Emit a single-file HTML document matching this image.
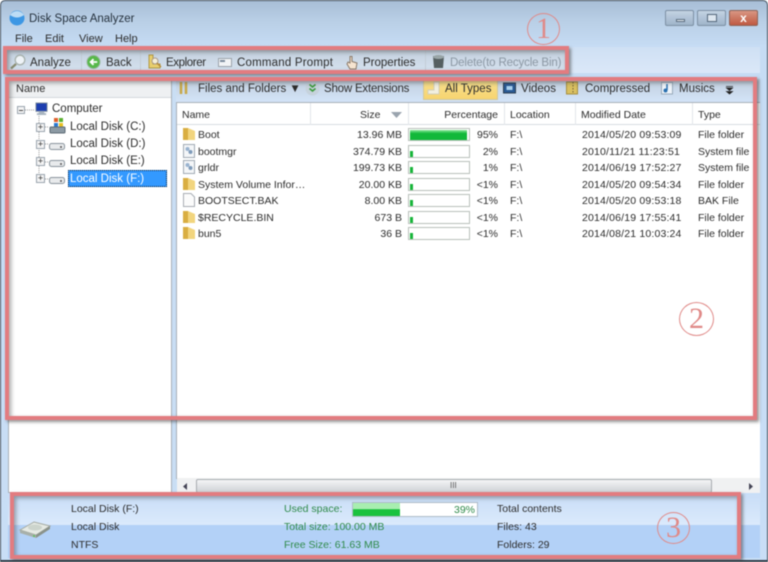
<!DOCTYPE html>
<html><head><meta charset="utf-8"><style>
html,body{margin:0;padding:0;width:768px;height:562px;overflow:hidden;background:#fff}
*{box-sizing:border-box}
body{font-family:"Liberation Sans",sans-serif;font-size:11px;color:#2c2c2c;position:relative;filter:blur(.4px)}
.a,.t{position:absolute}
.t{white-space:nowrap;line-height:14px;height:14px;margin-top:1px}
.r{text-align:right}
.s{font-size:10.5px}
.m{font-size:11.5px}
.d{letter-spacing:.17px}
.box{position:absolute;border:4px solid #e27c80;box-shadow:2px 2px 3px rgba(60,60,60,.55), inset 2px 2px 4px rgba(60,60,60,.45)}
.sep{position:absolute;width:1px;background:#c2ccd6}
.hs{position:absolute;width:1px;background:#e2e6ea;top:103px;height:22px}
.bar{position:absolute;left:408px;width:62px;height:13px;border:1px solid #b8c0ba;background:#fff}
.bar i{position:absolute;left:1px;top:5px;width:3px;height:6px;background:#18b53a;display:block}
.pm{position:absolute;left:36px;width:9px;height:9px;border:1px solid #9aa4ae;background:#f4f4f4;font:9px/7px "Liberation Sans",sans-serif;text-align:center}
.num{position:absolute;border:1.5px solid #e08a88;border-radius:50%;text-align:center;font-family:"Liberation Serif",serif;color:#e08a88}
svg{position:absolute;overflow:visible}
</style></head><body>
<div class="a" style="left:0;top:0;width:768px;height:562px;background:linear-gradient(#a8bed6 0,#b9cfe6 20px,#c6dcf4 45px,#c9def6 100%);border:1px solid #3c4a58;border-bottom:2px solid #2d3a46;border-radius:5px 5px 0 0"></div>

<!-- title -->
<svg style="left:9px;top:10px" width="16" height="16" viewBox="0 0 16 16"><circle cx="8" cy="8" r="7.5" fill="#3d97e4"/><path d="M1 5Q8 10 15 5Q12 1 8 1Q4 1 1 5Z" fill="#bcdcf5"/></svg>
<div class="t" style="left:29px;top:11px;font-size:11.5px;color:#26323e">Disk Space Analyzer</div>
<div class="t" style="left:15px;top:31px">File</div>
<div class="t" style="left:45px;top:31px">Edit</div>
<div class="t" style="left:79px;top:31px">View</div>
<div class="t" style="left:115px;top:31px">Help</div>

<!-- window buttons -->
<div class="a" style="left:665px;top:10px;width:29px;height:16px;border:1px solid #7d90a4;border-radius:2px;background:linear-gradient(#c4d3e3,#9fb4ca)"></div>
<div class="a" style="left:676px;top:19px;width:9px;height:3px;background:#eef3f8;border:1px solid #5a6c7e"></div>
<div class="a" style="left:697px;top:10px;width:29px;height:16px;border:1px solid #7d90a4;border-radius:2px;background:linear-gradient(#c4d3e3,#9fb4ca)"></div>
<div class="a" style="left:707px;top:14px;width:10px;height:8px;border:1px solid #55687c;background:#dde6ef"></div>
<div class="a" style="left:729px;top:10px;width:29px;height:16px;border:1px solid #8e6458;border-radius:2px;background:linear-gradient(#d99683,#bf5a42)"></div>
<div class="t" style="left:729px;top:10px;width:29px;text-align:center;color:#fff;font-weight:bold;font-size:12px">x</div>

<!-- toolbar strip -->
<div class="a" style="left:8px;top:47px;width:752px;height:26px;background:linear-gradient(#cfe0f4,#dbe8f8)"></div>
<div class="a" style="left:7px;top:49px;width:559px;height:24px;background:linear-gradient(#c3d0de,#d7e3f0)"></div>
<div class="sep" style="left:81px;top:50px;height:22px"></div>
<div class="sep" style="left:140px;top:50px;height:22px"></div>
<div class="sep" style="left:425px;top:50px;height:22px"></div>
<svg style="left:10px;top:54px" width="16" height="16" viewBox="0 0 16 16"><circle cx="10" cy="6" r="4.8" fill="#eef3f7" stroke="#a8b2ae" stroke-width="1.3"/><path d="M6 10L1 14.500" stroke="#8a8c70" stroke-width="2.200"/></svg>
<div class="t m" style="left:30px;top:55px">Analyze</div>
<svg style="left:86px;top:55px" width="15" height="14" viewBox="0 0 15 15"><circle cx="7.500" cy="7.500" r="7" fill="#57b84a" stroke="#9bb7a0"/><path d="M11.500 7.500H5M7.500 4.500L4.500 7.500L7.500 10.500" fill="none" stroke="#fff" stroke-width="2"/></svg>
<div class="t m" style="left:106px;top:55px">Back</div>
<svg style="left:148px;top:54px" width="14" height="15" viewBox="0 0 14 15"><path d="M1 1H5V10H12V14H1Z" fill="#e8cf6e" stroke="#b09848"/><circle cx="7" cy="7" r="3" fill="#f4efd8" stroke="#a98"/><path d="M9 9L13 13" stroke="#b58a3a" stroke-width="1.500"/></svg>
<div class="t m" style="left:166px;top:55px;letter-spacing:-.4px">Explorer</div>
<div class="a" style="left:218px;top:58px;width:14px;height:9px;border:1px solid #9aa2aa;background:#f2f4f6"></div>
<div class="a" style="left:220px;top:60px;width:5px;height:2px;background:#7a8a9c"></div>
<div class="t m" style="left:237px;top:55px;letter-spacing:.2px">Command Prompt</div>
<svg style="left:346px;top:55px" width="12" height="15" viewBox="0 0 12 15"><path d="M4 1.500V8L2 7L1 9L4 14H10L11 8L6 6.500V1.500Z" fill="#f6e4d0" stroke="#8a7a6a"/></svg>
<div class="t m" style="left:363px;top:55px">Properties</div>
<svg style="left:432px;top:54px" width="13" height="15" viewBox="0 0 13 15"><path d="M1 2H12L11 14H2Z" fill="#555f61"/><ellipse cx="6.500" cy="3" rx="5.500" ry="2" fill="#9aa6a8"/></svg>
<div class="t m" style="left:450px;top:55px;color:#8b97a3;letter-spacing:-.14px">Delete(to Recycle Bin)</div>

<!-- left panel -->
<div class="a" style="left:8px;top:77px;width:164px;height:416px;background:#fff;border:1px solid #a8b0b8"></div>
<div class="a" style="left:9px;top:79px;width:162px;height:19px;background:#eef0f2;border-bottom:1px solid #d4d8dc"></div>
<div class="t" style="left:16px;top:81px">Name</div>
<div class="a" style="left:172px;top:77px;width:4px;height:416px;background:#c9def4"></div>

<!-- tree -->
<div class="a" style="left:17px;top:106px;width:8px;height:8px;border:1px solid #9aa4ae;background:#f4f4f4"></div>
<div class="a" style="left:19px;top:110px;width:4px;height:1px;background:#444"></div>
<svg style="left:18px;top:102px" width="40" height="85"><path d="M7 8H16M21 14V75M21 25H30M21 42H30M21 60H30M21 77H30" stroke="#9a9a9a" stroke-dasharray="1 1" fill="none"/></svg>
<svg style="left:35px;top:103px" width="13" height="12" viewBox="0 0 14 13"><rect x="1" y="0" width="12" height="9" fill="#1d3eb0" stroke="#7a8a9a"/><path d="M4 9H10V11H12V13H2V11H4Z" fill="#a8b4c0"/></svg>
<div class="t m" style="left:52px;top:101px">Computer</div>
<div class="pm" style="top:123px">+</div>
<div class="pm" style="top:140px">+</div>
<div class="pm" style="top:157px">+</div>
<div class="pm" style="top:174px">+</div>
<svg style="left:49px;top:118px" width="17" height="16" viewBox="0 0 17 16"><rect x="5" y="0" width="4" height="4" fill="#e0602a"/><rect x="10" y="0" width="4" height="4" fill="#5cb030"/><rect x="5" y="5" width="4" height="4" fill="#2a78d0"/><rect x="10" y="5" width="4" height="4" fill="#e8c020"/><rect x="1" y="9" width="15" height="6" rx="1" fill="#8c9aa4" stroke="#5c6a74"/></svg>
<svg style="left:49px;top:141px" width="16" height="10"><rect x=".5" y="2.500" width="15" height="6" rx="2" fill="#e8eaec" stroke="#8a949c"/><circle cx="12" cy="6" r="1" fill="#555"/></svg>
<svg style="left:49px;top:158px" width="16" height="10"><rect x=".5" y="2.500" width="15" height="6" rx="2" fill="#e8eaec" stroke="#8a949c"/><circle cx="12" cy="6" r="1" fill="#555"/></svg>
<svg style="left:49px;top:175px" width="16" height="10"><rect x=".5" y="2.500" width="15" height="6" rx="2" fill="#e8eaec" stroke="#8a949c"/><circle cx="12" cy="6" r="1" fill="#555"/></svg>
<div class="t m" style="left:70px;top:119px">Local Disk (C:)</div>
<div class="t m" style="left:70px;top:136px">Local Disk (D:)</div>
<div class="t m" style="left:70px;top:153px">Local Disk (E:)</div>
<div class="a" style="left:68px;top:170px;width:99px;height:17px;background:#3399ff;border:1px dotted #123"></div>
<div class="t m" style="left:70px;top:171px;color:#fff">Local Disk (F:)</div>

<!-- right panel -->
<div class="a" style="left:176px;top:79px;width:584px;height:23px;background:linear-gradient(#c2cfde,#d3e4f8)"></div>
<svg style="left:179px;top:81px" width="12" height="14"><path d="M2 1V13M7 1V13" stroke="#c8a848" stroke-width="2.500"/></svg>
<div class="t m" style="left:198px;top:81px">Files and Folders ▼</div>
<svg style="left:305px;top:81px" width="15" height="15"><circle cx="7.500" cy="7.500" r="7" fill="#c6d2dc"/><path d="M4.500 3.500L7.500 6L10.500 3.500M4.500 7.500L7.500 10L10.500 7.500" fill="none" stroke="#3a9a3a" stroke-width="1.600"/></svg>
<div class="t m" style="left:324px;top:81px;letter-spacing:-.2px">Show Extensions</div>
<div class="a" style="left:423px;top:79px;width:75px;height:21px;background:linear-gradient(#f7e08e,#f7d470);border:1px solid #d0c8a0"></div>
<svg style="left:427px;top:81px" width="13" height="15"><path d="M1 13H12V1H7V9H1Z" fill="#f2efe0" stroke="#d4d0b8"/></svg>
<div class="t m" style="left:445px;top:81px">All Types</div>
<svg style="left:503px;top:81px" width="13" height="14"><rect x=".5" y="2" width="12" height="10" fill="#2a5a94" stroke="#2c3e50"/><rect x="3.500" y="5" width="6" height="4" fill="#a9d0ee"/></svg>
<div class="t m" style="left:521px;top:81px">Videos</div>
<svg style="left:566px;top:81px" width="13" height="14"><rect x=".5" y="1" width="11" height="12" fill="#d9c060" stroke="#a89040"/><path d="M7 1V13" stroke="#70603a" stroke-dasharray="1.500 1.500"/></svg>
<div class="t m" style="left:585px;top:81px">Compressed</div>
<svg style="left:661px;top:81px" width="13" height="14"><rect x=".5" y="1.500" width="11" height="11.500" fill="#eef4fa" stroke="#9ab"/><path d="M6 3V9" stroke="#2a70b0" stroke-width="1.500"/><circle cx="4.500" cy="9.500" r="2" fill="#2a70b0"/></svg>
<div class="t m" style="left:679px;top:81px">Musics</div>
<svg style="left:726px;top:86px" width="8" height="9"><path d="M0 .5H7M.5 2L3.500 4.500L6.500 2ZM.5 5.500L3.500 8L6.500 5.500Z" fill="#222" stroke="#222" stroke-width=".8"/></svg>

<div class="a" style="left:176px;top:102px;width:584px;height:377px;background:#fff;border:1px solid #a8b0b8;border-right:0"></div>
<div class="a" style="left:177px;top:103px;width:583px;height:22px;background:#fff;border-bottom:1px solid #d8dde2"></div>
<div class="hs" style="left:310px"></div>
<div class="hs" style="left:408px"></div>
<div class="hs" style="left:504px"></div>
<div class="hs" style="left:575px"></div>
<div class="hs" style="left:692px"></div>
<div class="t s" style="left:182px;top:107px">Name</div>
<div class="t s" style="left:360px;top:107px">Size</div>
<svg style="left:391px;top:112px" width="11" height="6"><path d="M0 0H11L5.500 6Z" fill="#9aa4ae"/></svg>
<div class="t r s" style="left:424px;top:107px;width:74px">Percentage</div>
<div class="t s" style="left:510px;top:107px">Location</div>
<div class="t s" style="left:581px;top:107px">Modified Date</div>
<div class="t s" style="left:698px;top:107px">Type</div>

<!-- rows -->
<svg style="left:183px;top:127px" width="12" height="14"><path d="M0 1H5V13H0Z" fill="#d9ae42"/><path d="M5 1L12 4V13H5Z" fill="#f2d57e"/></svg>
<div class="t s" style="left:198px;top:127px">Boot</div>
<div class="t r s" style="left:330px;top:127px;width:72px">13.96 MB</div>
<div class="bar" style="top:128px"><b style="position:absolute;left:1px;top:1px;width:57px;height:10px;background:linear-gradient(#8ce89c 0,#12b83a 35%,#12b83a 100%)"></b></div>
<div class="t r s" style="left:470px;top:127px;width:28px">95%</div>
<div class="t s" style="left:510px;top:127px">F:\</div>
<div class="t s d" style="left:582px;top:127px">2014/05/20 09:53:09</div>
<div class="t s" style="left:698px;top:127px">File folder</div>

<svg style="left:183px;top:144px" width="12" height="14"><path d="M.5.500H11.500V13.500H.500Z" fill="#f4f6f8" stroke="#a0aab4"/><circle cx="4.500" cy="5" r="2" fill="#9ab4d0"/><circle cx="7.500" cy="8" r="2" fill="#7f9cba"/></svg>
<div class="t s" style="left:198px;top:144px">bootmgr</div>
<div class="t r s" style="left:330px;top:144px;width:72px">374.79 KB</div>
<div class="bar" style="top:145px"><i></i></div>
<div class="t r s" style="left:470px;top:144px;width:28px">2%</div>
<div class="t s" style="left:510px;top:144px">F:\</div>
<div class="t s d" style="left:582px;top:144px">2010/11/21 11:23:51</div>
<div class="t s" style="left:698px;top:144px">System file</div>

<svg style="left:183px;top:160px" width="12" height="14"><path d="M.5.500H11.500V13.500H.500Z" fill="#f4f6f8" stroke="#a0aab4"/><circle cx="4.500" cy="5" r="2" fill="#9ab4d0"/><circle cx="7.500" cy="8" r="2" fill="#7f9cba"/></svg>
<div class="t s" style="left:198px;top:160px">grldr</div>
<div class="t r s" style="left:330px;top:160px;width:72px">199.73 KB</div>
<div class="bar" style="top:161px"><i></i></div>
<div class="t r s" style="left:470px;top:160px;width:28px">1%</div>
<div class="t s" style="left:510px;top:160px">F:\</div>
<div class="t s d" style="left:582px;top:160px">2014/06/19 17:52:27</div>
<div class="t s" style="left:698px;top:160px">System file</div>

<svg style="left:183px;top:177px" width="12" height="14"><path d="M0 1H5V13H0Z" fill="#d9ae42"/><path d="M5 1L12 4V13H5Z" fill="#f2d57e"/></svg>
<div class="t s" style="left:198px;top:177px">System Volume Infor…</div>
<div class="t r s" style="left:330px;top:177px;width:72px">20.00 KB</div>
<div class="bar" style="top:178px"><i></i></div>
<div class="t r s" style="left:470px;top:177px;width:28px">&lt;1%</div>
<div class="t s" style="left:510px;top:177px">F:\</div>
<div class="t s d" style="left:582px;top:177px">2014/05/20 09:54:34</div>
<div class="t s" style="left:698px;top:177px">File folder</div>

<svg style="left:183px;top:193px" width="12" height="14"><path d="M.5.500H8L11.500 4V13.500H.500Z" fill="#fbfbfb" stroke="#a8aeb4"/></svg>
<div class="t s" style="left:198px;top:193px">BOOTSECT.BAK</div>
<div class="t r s" style="left:330px;top:193px;width:72px">8.00 KB</div>
<div class="bar" style="top:194px"><i></i></div>
<div class="t r s" style="left:470px;top:193px;width:28px">&lt;1%</div>
<div class="t s" style="left:510px;top:193px">F:\</div>
<div class="t s d" style="left:582px;top:193px">2014/05/20 09:53:18</div>
<div class="t s" style="left:698px;top:193px">BAK File</div>

<svg style="left:183px;top:210px" width="12" height="14"><path d="M0 1H5V13H0Z" fill="#d9ae42"/><path d="M5 1L12 4V13H5Z" fill="#f2d57e"/></svg>
<div class="t s" style="left:198px;top:210px">$RECYCLE.BIN</div>
<div class="t r s" style="left:330px;top:210px;width:72px">673 B</div>
<div class="bar" style="top:211px"><i></i></div>
<div class="t r s" style="left:470px;top:210px;width:28px">&lt;1%</div>
<div class="t s" style="left:510px;top:210px">F:\</div>
<div class="t s d" style="left:582px;top:210px">2014/06/19 17:55:41</div>
<div class="t s" style="left:698px;top:210px">File folder</div>

<svg style="left:183px;top:226px" width="12" height="14"><path d="M0 1H5V13H0Z" fill="#d9ae42"/><path d="M5 1L12 4V13H5Z" fill="#f2d57e"/></svg>
<div class="t s" style="left:198px;top:226px">bun5</div>
<div class="t r s" style="left:330px;top:226px;width:72px">36 B</div>
<div class="bar" style="top:227px"><i></i></div>
<div class="t r s" style="left:470px;top:226px;width:28px">&lt;1%</div>
<div class="t s" style="left:510px;top:226px">F:\</div>
<div class="t s d" style="left:582px;top:226px">2014/08/21 10:03:24</div>
<div class="t s" style="left:698px;top:226px">File folder</div>

<!-- scrollbar -->
<div class="a" style="left:177px;top:478px;width:583px;height:15px;background:#f0f1f2"></div>
<div class="a" style="left:196px;top:479px;width:516px;height:14px;background:linear-gradient(#f4f5f6,#cfd2d6);border:1px solid #a8acb0;border-radius:2px"></div>
<div class="t" style="left:450px;top:480px;font-size:8px;line-height:10px;color:#555">III</div>
<svg style="left:183px;top:483px" width="4" height="7"><path d="M4 0V7L0 3.500Z" fill="#445"/></svg>
<svg style="left:749px;top:483px" width="4" height="7"><path d="M0 0V7L4 3.500Z" fill="#445"/></svg>

<!-- status -->
<div class="a" style="left:8px;top:493px;width:752px;height:32px;background:linear-gradient(#c8ddf7,#dbeafc)"></div>
<div class="a" style="left:8px;top:525px;width:752px;height:33px;background:#b3d1f7"></div>
<svg style="left:19px;top:520px" width="32" height="18" viewBox="0 0 32 18"><path d="M1 10L15 2L31 6L17 15Z" fill="#e6eae4" stroke="#a4aaa2"/><path d="M1 10L17 15V18L1 13Z" fill="#a8b0aa"/><path d="M17 15L31 6V9L17 18Z" fill="#8a928a"/><ellipse cx="16" cy="7.500" rx="7" ry="3" fill="#ccd4cc"/><circle cx="15" cy="16" r="1" fill="#5ac05a"/></svg>
<div class="t s" style="left:71px;top:501px">Local Disk (F:)</div>
<div class="t s" style="left:71px;top:519px">Local Disk</div>
<div class="t s" style="left:71px;top:537px">NTFS</div>
<div class="t s" style="left:284px;top:501px;color:#2f8a4a">Used space:</div>
<div class="t s" style="left:284px;top:519px;color:#2f8a4a">Total size: 100.00 MB</div>
<div class="t s" style="left:284px;top:537px;color:#2f8a4a">Free Size: 61.63 MB</div>
<div class="a" style="left:352px;top:502px;width:126px;height:15px;background:#fff;border:1px solid #aebcc8"></div>
<div class="a" style="left:353px;top:503px;width:47px;height:13px;background:linear-gradient(#a8eeb0 0,#a8eeb0 45%,#1ac23e 50%,#1ac23e 100%)"></div>
<div class="t r s" style="left:440px;top:502px;width:35px;color:#2f8a4a">39%</div>
<div class="t s" style="left:497px;top:501px">Total contents</div>
<div class="t s" style="left:497px;top:519px">Files: 43</div>
<div class="t s" style="left:497px;top:537px">Folders: 29</div>

<!-- annotation boxes -->
<div class="box" style="left:3px;top:46px;width:566px;height:28px"></div>
<div class="box" style="left:5px;top:77px;width:752px;height:343px"></div>
<div class="box" style="left:10px;top:492px;width:731px;height:67px"></div>

<!-- annotation numbers -->
<div class="num" style="left:527px;top:13px;width:33px;height:32px;font-size:30px;line-height:29px">1</div>
<div class="num" style="left:679px;top:302px;width:35px;height:34px;font-size:30px;line-height:31px">2</div>
<div class="num" style="left:657px;top:512px;width:33px;height:32px;font-size:30px;line-height:29px">3</div>
</body></html>
